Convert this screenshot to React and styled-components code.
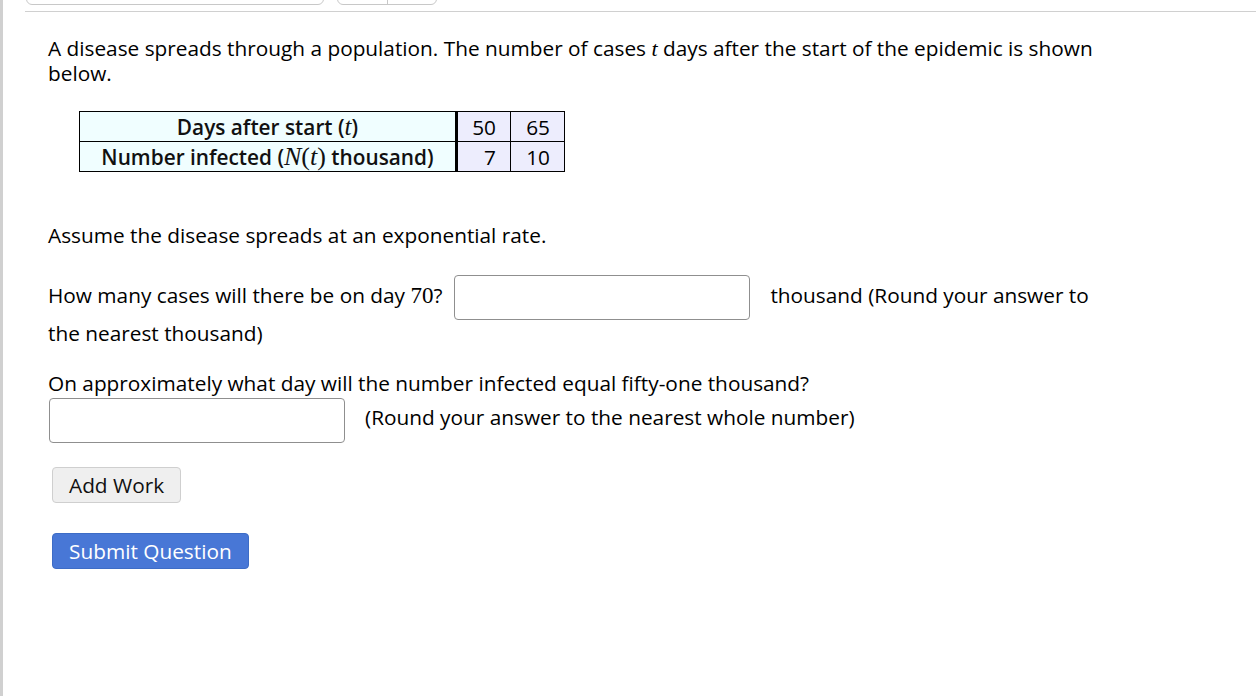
import styled, { createGlobalStyle } from 'styled-components';

const GlobalStyle = createGlobalStyle`
  html, body {
    margin: 0;
    padding: 0;
    background: #fff;
  }
  body {
    font-family: "Open Sans", "Liberation Sans", sans-serif;
    color: #000;
  }
`;

const Page = styled.div`
  min-height: 696px;
  border-left: 3px solid #d0d0d0;
  box-sizing: border-box;
`;

const Toolbar = styled.div`
  display: flex;
  align-items: flex-end;
  gap: 13px;
  height: 5px;
  overflow: hidden;
  padding-left: 23px;
`;

const ToolBox = styled.div`
  width: ${({ w }) => w}px;
  height: 30px;
  flex-shrink: 0;
  border: 1px solid #c8c8c8;
  border-radius: 0 0 6px 6px;
  box-sizing: border-box;
  display: flex;
`;

const ToolSegment = styled.div`
  flex: 1;
  & + & {
    border-left: 1px solid #c8c8c8;
  }
`;

const Divider = styled.hr`
  margin: 6px 0 0 22px;
  border: 0;
  border-top: 1px solid #d0d0d0;
`;

const Question = styled.div`
  padding: 24px 20px 0 45px;
  font-size: 20.8px;
  line-height: 24px;
`;

const Para = styled.p`
  margin: 0 0 ${({ mb }) => mb ?? 26}px;
  max-width: 1062px;
  line-height: ${({ lh }) => lh ?? 24}px;
`;

const MathVar = styled.span`
  font-family: "Liberation Serif", "DejaVu Serif", serif;
  font-style: ${({ upright }) => (upright ? 'normal' : 'italic')};
  font-weight: 400;
  font-size: ${({ size }) => size ?? 22}px;
`;

const DataTable = styled.table`
  border-collapse: collapse;
  margin: 0 0 51px 31px;
  font-size: 20.8px;
  line-height: 24px;
`;

const HeadCell = styled.th`
  width: 377px;
  height: 30px;
  padding: 0 6px;
  box-sizing: border-box;
  background: #f0feff;
  border: 1px solid #000;
  border-right: 3px solid #000;
  font-weight: 600;
  text-align: center;
  color: #111;
`;

const ValueCell = styled.td`
  width: 54px;
  height: 30px;
  padding: 0 14px 0 6px;
  box-sizing: border-box;
  background: #ededfd;
  border: 1px solid #000;
  text-align: right;
`;

const AnswerInput = styled.input`
  width: 296px;
  height: 45px;
  box-sizing: border-box;
  margin: ${({ mt }) => mt ?? 0}px 20px 0 ${({ ml }) => ml ?? 12}px;
  border: 1px solid #8f8f8f;
  border-radius: 4px;
  vertical-align: middle;
  font-size: 18px;
  background: #fff;
`;

const Button = styled.button`
  display: block;
  font-family: "Open Sans", "Liberation Sans", sans-serif;
  font-size: 20.8px;
  height: 36px;
  padding: 0 16px;
  margin: 0 0 ${({ mb }) => mb ?? 0}px 4px;
  border-radius: 4px;
  cursor: pointer;
  border: 1px solid ${({ primary }) => (primary ? '#3d6cc6' : '#cfcfcf')};
  background: ${({ primary }) => (primary ? '#4877d6' : '#efefef')};
  color: ${({ primary }) => (primary ? '#fff' : '#111')};
`;

export default function App() {
  return (
    <>
      <GlobalStyle />
      <Page>
        <Toolbar>
          <ToolBox w={298} />
          <ToolBox w={100}>
            <ToolSegment />
            <ToolSegment />
          </ToolBox>
        </Toolbar>
        <Divider />
        <Question>
          <Para mb={26}>
            A disease spreads through a population. The number of cases{' '}
            <MathVar>t</MathVar> days after the start of the epidemic is shown below.
          </Para>
          <DataTable>
            <tbody>
              <tr>
                <HeadCell>
                  Days after start (<MathVar size={25}>t</MathVar>)
                </HeadCell>
                <ValueCell>50</ValueCell>
                <ValueCell>65</ValueCell>
              </tr>
              <tr>
                <HeadCell>
                  Number infected (<MathVar size={26}>N</MathVar>
                  <MathVar size={26} upright>(</MathVar>
                  <MathVar size={26}>t</MathVar>
                  <MathVar size={26} upright>)</MathVar> thousand)
                </HeadCell>
                <ValueCell>7</ValueCell>
                <ValueCell>10</ValueCell>
              </tr>
            </tbody>
          </DataTable>
          <Para mb={28}>Assume the disease spreads at an exponential rate.</Para>
          <Para lh={26} mb={24}>
            How many cases will there be on day <MathVar upright size={23}>70</MathVar>?
            <AnswerInput type="text" />
            thousand (Round your answer to the nearest thousand)
          </Para>
          <Para lh={26} mb={24}>
            On approximately what day will the number infected equal fifty-one thousand?
            <br />
            <AnswerInput type="text" ml={1} mt={2} />
            (Round your answer to the nearest whole number)
          </Para>
          <Button mb={30}>Add Work</Button>
          <Button primary>Submit Question</Button>
        </Question>
      </Page>
    </>
  );
}
